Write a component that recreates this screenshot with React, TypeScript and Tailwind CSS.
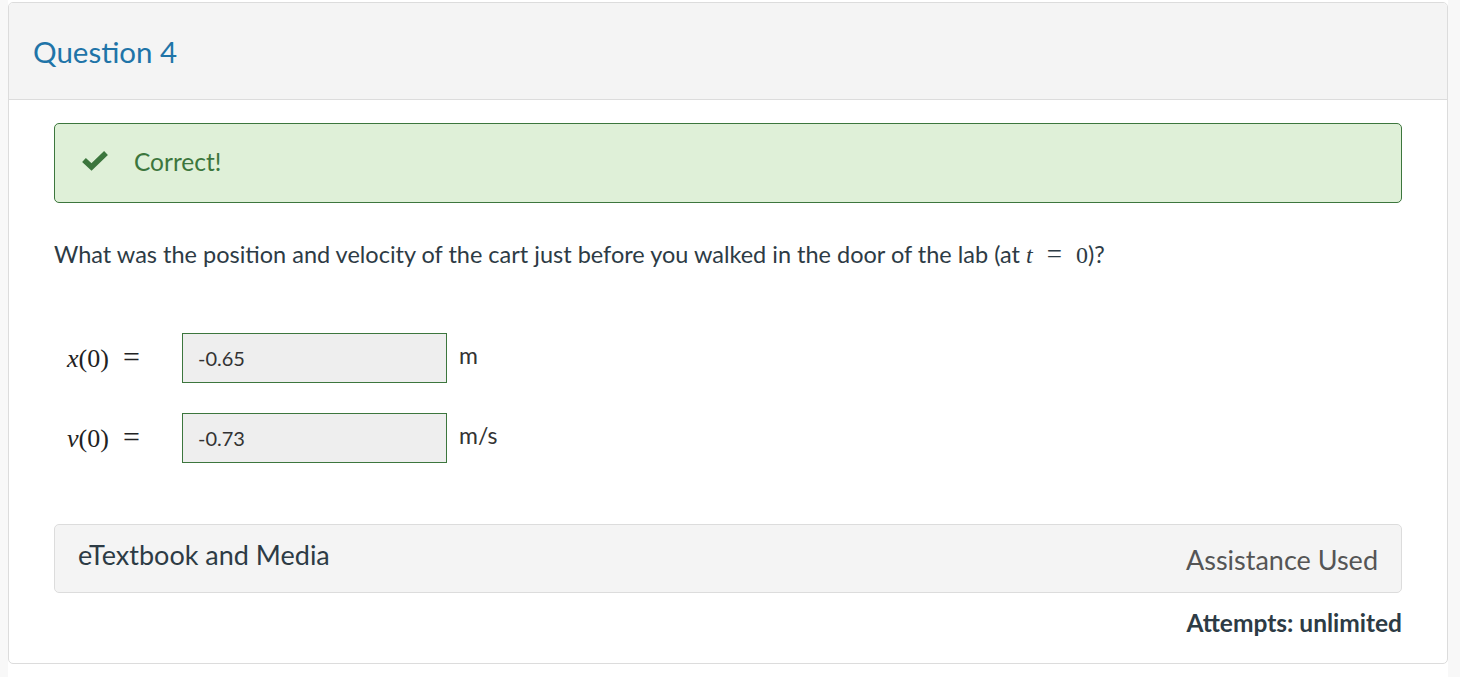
import React from 'react';

const lato = { fontFamily: 'Lato, "Open Sans", sans-serif' };

function MathVar({ children }: { children: React.ReactNode }) {
  return <span className="font-['Liberation_Serif',serif] italic text-[24px]">{children}</span>;
}

function AnswerRow({ label, value, unit }: { label: string; value: string; unit: string }) {
  return (
    <div className="flex items-center h-[50px]">
      <div className="w-[128px] pl-[13px] font-['Liberation_Serif',serif] text-[26px] text-[#222] whitespace-nowrap">
        <span className="italic">{label}</span>(0)<span className="ml-[14px] text-[30px] leading-none">=</span>
      </div>
      <div className="w-[265px] h-[50px] bg-[#eeeeee] border border-[#3c763d] flex items-center pl-[15px] text-[20px] text-[#333]">
        {value}
      </div>
      <div className="ml-[12px] mt-[-6px] text-[23px] text-[#333]">{unit}</div>
    </div>
  );
}

export default function App() {
  return (
    <div className="flex min-h-[677px] bg-white" style={lato}>
      <div className="w-[8px] bg-[#f8f8f8]" />
      <div className="flex-1 pt-[2px]">
        {/* ==================== CARD ==================== */}
        <div className="border border-[#dcdcdc] rounded-[5px] bg-white overflow-hidden">
          <div className="h-[97px] bg-[#f4f4f4] border-b border-[#dcdcdc] flex items-center pl-[24px]">
            <h2 className="text-[29.5px] text-[#1f74a8] pt-[2px]">Question 4</h2>
          </div>

          <div className="px-[45px] pt-[23px] pb-[25px]">
            <div className="h-[80px] bg-[#dff0d8] border border-[#3c763d] rounded-[5px] flex items-center pl-[26px]">
              <svg width="28" height="22" viewBox="0 0 28 22" className="mt-[-6px]">
                <polyline points="3,11 10.5,18 25,4" fill="none" stroke="#3c763d" strokeWidth="5.5" strokeLinejoin="miter" />
              </svg>
              <span className="ml-[25px] text-[24.5px] text-[#3c763d] mt-[-2px]">Correct!</span>
            </div>

            <p className="mt-[35px] leading-[32px] text-[23.5px] text-[#2d3b45]">
              What was the position and velocity of the cart just before you walked in the door of the lab (at{' '}
              <MathVar>t</MathVar>
              <span className="font-['Liberation_Serif',serif] text-[27px] leading-none mx-[14px]">=</span>
              <span className="font-['Liberation_Serif',serif] text-[24px]">0</span>)?
            </p>

            <div className="mt-[62px] flex flex-col gap-[30px]">
              <AnswerRow label="x" value="-0.65" unit="m" />
              <AnswerRow label="v" value="-0.73" unit="m/s" />
            </div>

            <div className="mt-[61px] h-[69px] bg-[#f4f4f4] border border-[#dcdcdc] rounded-[5px] flex items-center justify-between pl-[23px] pr-[23px]">
              <span className="text-[27px] text-[#2d3b45] mt-[-6px]">eTextbook and Media</span>
              <span className="text-[27px] text-[#555] mt-[4px]">Assistance Used</span>
            </div>

            <div className="mt-[15px] leading-[30px] text-right text-[24.5px] font-bold text-[#2d3b45]">Attempts: unlimited</div>
          </div>
        </div>
      </div>
      <div className="w-[12px] bg-[#f8f8f8]" />
    </div>
  );
}
